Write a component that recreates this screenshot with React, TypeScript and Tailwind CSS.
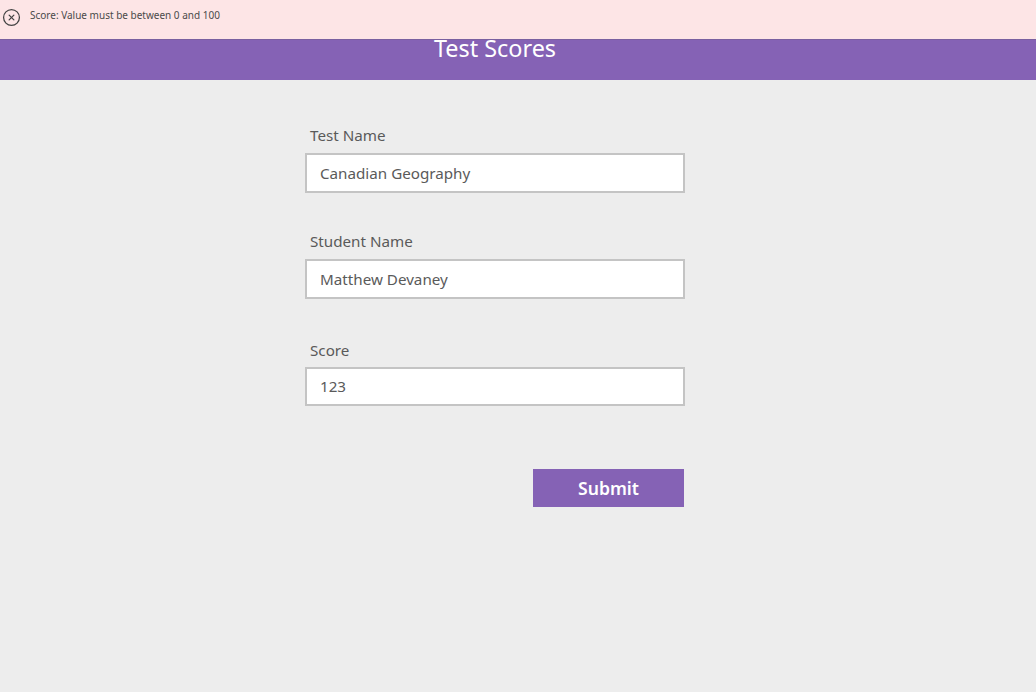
import { XCircle } from 'lucide-react';

const fields = [
  { label: 'Test Name', value: 'Canadian Geography', margin: 'mt-[44px]', box: 'mt-[7px] h-[40px]' },
  { label: 'Student Name', value: 'Matthew Devaney', margin: 'mt-[37px]', box: 'mt-[7px] h-[40px]' },
  { label: 'Score', value: '123', margin: 'mt-[40px]', box: 'mt-[6px] h-[39px]' },
];

function Field({ label, value, margin, box }: { label: string; value: string; margin: string; box: string }) {
  return (
    <div className={margin}>
      <div className="h-[22px] pl-[5px] text-[15.2px] leading-[22px] text-[#5a5a5a]">{label}</div>
      <div className={`${box} flex items-center border-2 border-[#c4c4c4] bg-white pl-[13px] text-[15.2px] text-[#5a5a5a]`}>
        {value}
      </div>
    </div>
  );
}

export default function App() {
  return (
    <div className="flex h-[692px] w-[1036px] flex-col overflow-hidden bg-[#ededed] font-['Noto_Sans',sans-serif]">
      <div className="flex h-[39px] shrink-0 items-start bg-[#fde5e6] pl-[2px] pt-[8px]">
        <XCircle size={19} strokeWidth={1.6} className="text-[#444444]" />
        <span className="ml-[9px] mt-[1px] text-[10px] leading-[13px] text-[#4a4a4a]">Score: Value must be between 0 and 100</span>
      </div>
      <div className="h-[41px] shrink-0 border-t border-[#7a60a0] bg-[#8562b5]">
        <div className="w-[990px] text-center text-[23.4px] leading-[17px] text-white">Test Scores</div>
      </div>
      <div className="ml-[305px] w-[380px]">
        {fields.map((f) => (
          <Field key={f.label} {...f} />
        ))}
        <div className="mt-[63px] flex justify-end pr-[1px]">
          <button className="h-[38px] w-[151px] bg-[#8562b5] text-[17.6px] font-semibold text-white">Submit</button>
        </div>
      </div>
    </div>
  );
}
